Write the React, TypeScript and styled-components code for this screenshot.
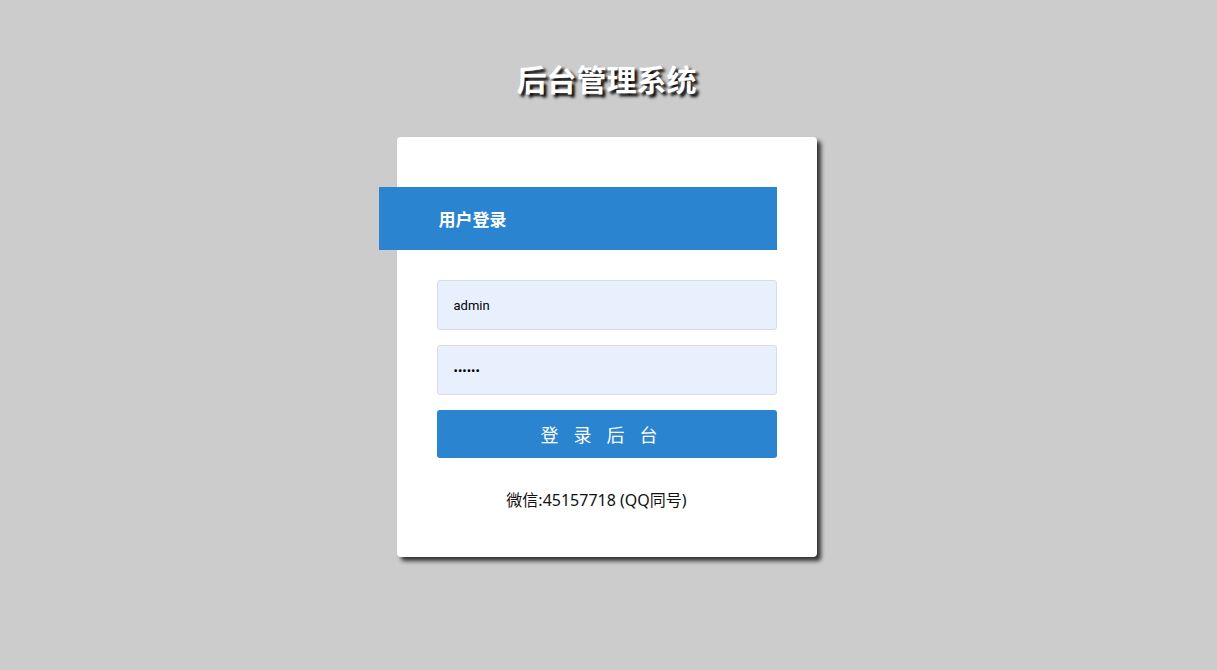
import { createGlobalStyle } from 'styled-components';
import styled from 'styled-components';

const GlobalStyle = createGlobalStyle`
  html, body {
    margin: 0;
    padding: 0;
    background-color: #cccccc;
    font-family: 'Noto Sans', 'Noto Sans CJK SC', sans-serif;
  }
  * {
    box-sizing: border-box;
  }
`;

const App = () => {
  return (
    <>
      <GlobalStyle />
      <LoginPage>
        <Title>后台管理系统</Title>
        <LoginCard>
          <CardHeader>用户登录</CardHeader>
          <LoginForm onSubmit={event => event.preventDefault()}>
            <TextInput type="text" defaultValue="admin" />
            <TextInput type="password" defaultValue="123456" />
            <SubmitButton type="submit">登录后台</SubmitButton>
          </LoginForm>
          <ContactText>微信:45157718 (QQ同号)</ContactText>
        </LoginCard>
      </LoginPage>
    </>
  );
};

export default App;

const LoginPage = styled.div`
  display: flex;
  flex-direction: column;
  align-items: center;
  width: 100%;
  min-height: 670px;
  padding-top: 58px;
  padding-right: 4px;
`;

const Title = styled.h1`
  margin: 0;
  height: 40px;
  line-height: 40px;
  font-size: 30px;
  font-weight: bold;
  color: #ffffff;
  text-shadow: 3px 3px 3px #000000;
  font-family: 'Noto Sans CJK SC', sans-serif;
`;

const LoginCard = styled.div`
  display: flex;
  flex-direction: column;
  width: 420px;
  height: 420px;
  margin-top: 39px;
  padding: 50px 40px 0;
  background-color: #ffffff;
  border-radius: 4px;
  box-shadow: 4px 4px 4px #333333;
`;

const CardHeader = styled.div`
  display: flex;
  align-items: center;
  height: 63px;
  width: 398px;
  margin-left: -58px;
  padding-left: 60px;
  background-color: #2a84d0;
  color: #ffffff;
  font-size: 17px;
  font-weight: bold;
  font-family: 'Noto Sans CJK SC', sans-serif;
`;

const LoginForm = styled.form`
  display: flex;
  flex-direction: column;
  gap: 15px;
  margin-top: 30px;
`;

const TextInput = styled.input`
  width: 100%;
  height: 50px;
  padding: 0 16px;
  border: 1px solid #d9dde3;
  border-radius: 3px;
  background-color: #e8f0fe;
  outline: none;
  font-family: Roboto, 'Liberation Sans', sans-serif;
  font-size: 13px;
  color: #000000;
`;

const SubmitButton = styled.button`
  width: 100%;
  height: 48px;
  border: none;
  border-radius: 3px;
  background-color: #2a84d0;
  color: #ffffff;
  font-size: 18px;
  letter-spacing: 15px;
  padding: 0;
  font-family: 'Noto Sans CJK SC', sans-serif;
  cursor: pointer;
`;

const ContactText = styled.p`
  margin: 32px 0 0;
  padding-right: 20px;
  line-height: 20px;
  text-align: center;
  font-size: 16px;
  color: #111111;
`;
